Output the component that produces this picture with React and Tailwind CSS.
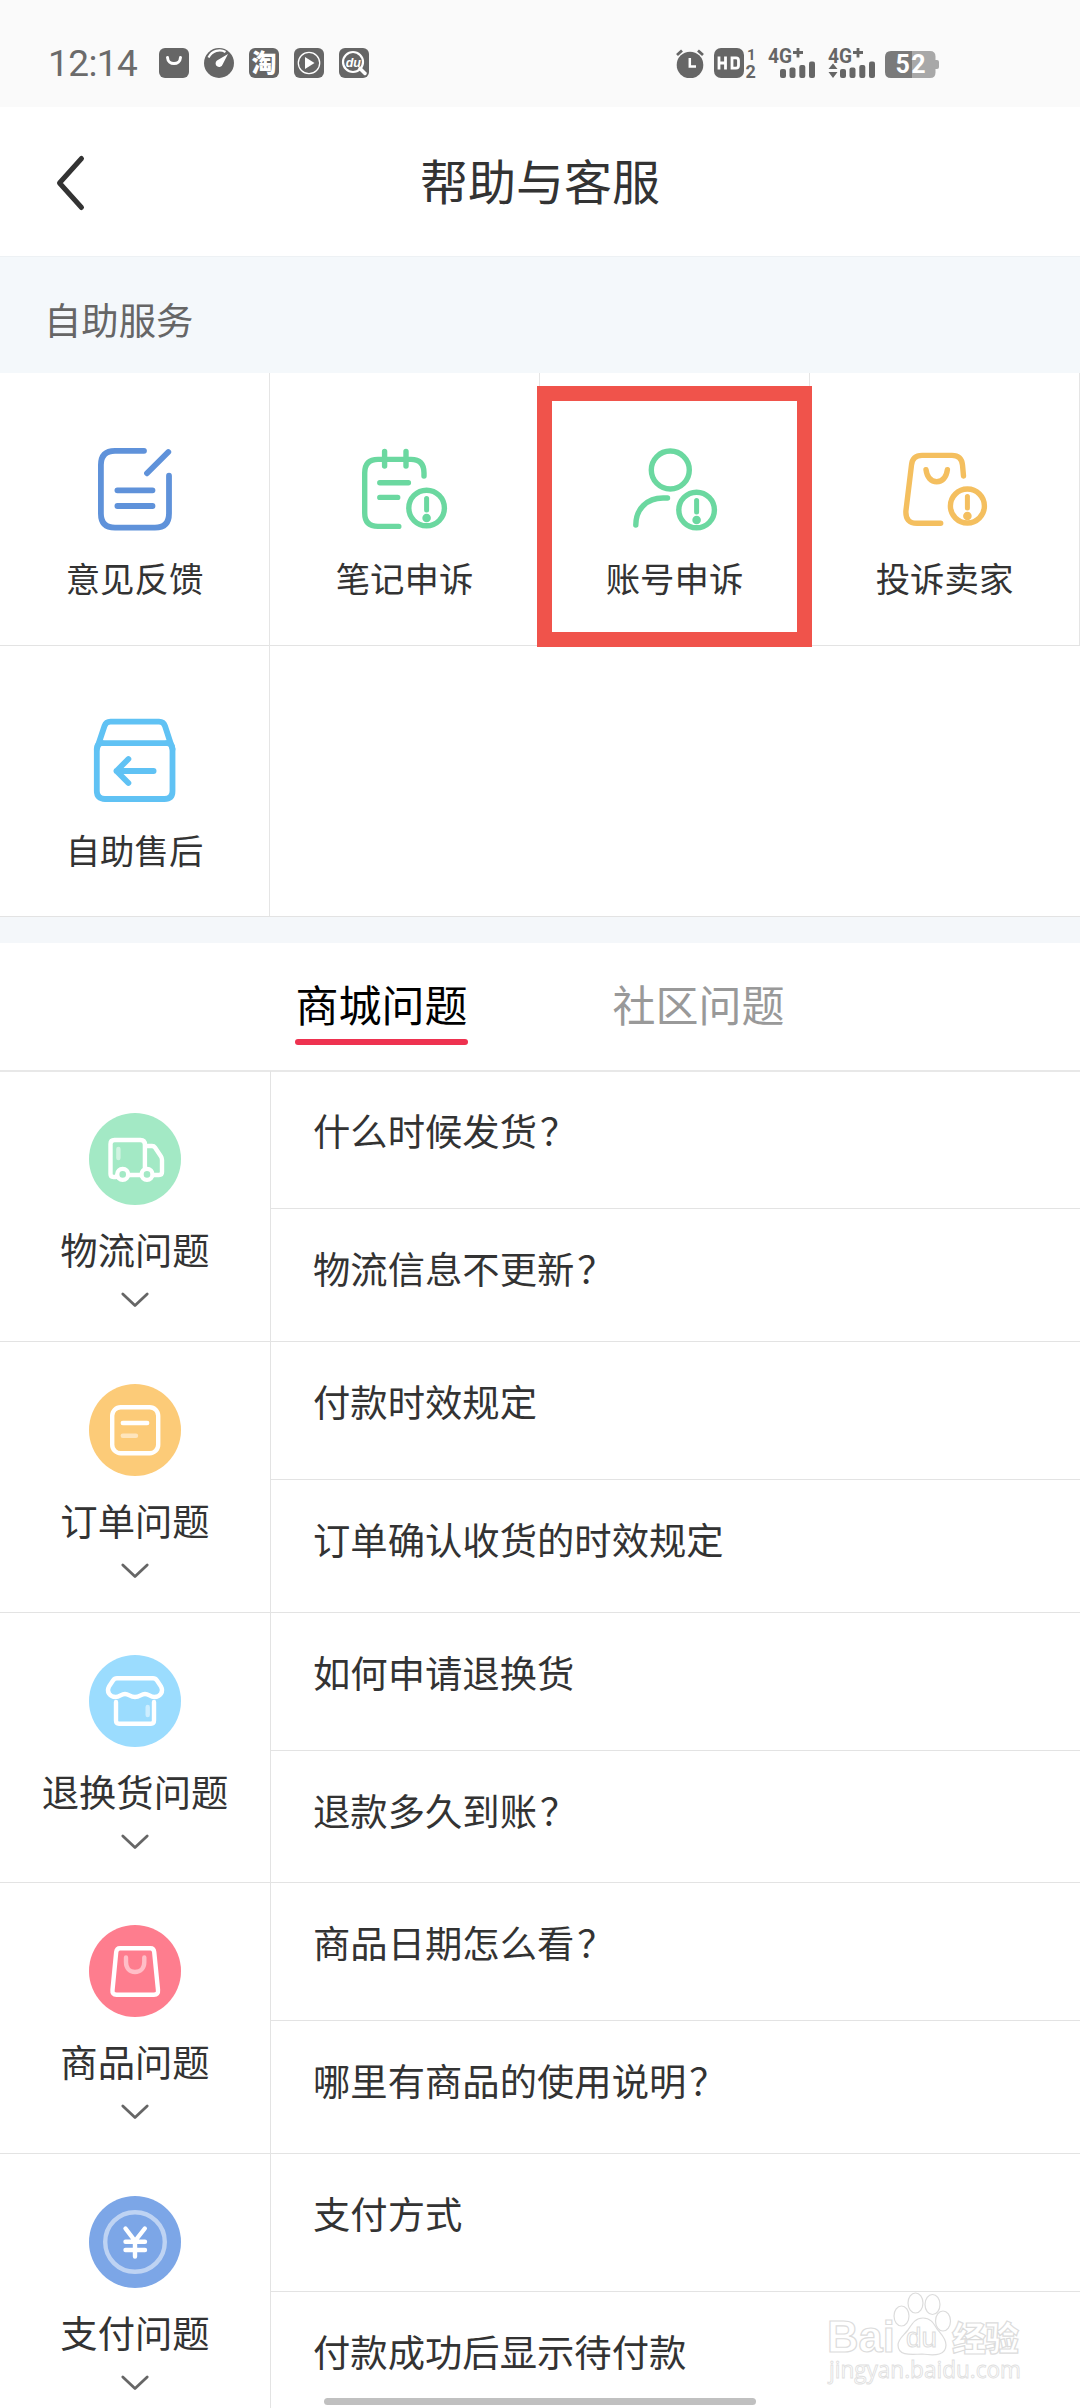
const HELP_FONT = "font-['Noto_Sans_CJK_SC',sans-serif]";

function Stroke({ color, width = 5.4, className = "size-24", box = 96, children }) {
  return (
    <svg
      viewBox={`0 0 ${box} ${box}`}
      className={className}
      fill="none"
      stroke={color}
      strokeWidth={width}
      strokeLinecap="round"
      strokeLinejoin="round"
    >
      {children}
    </svg>
  );
}

function Alert({ x, y, color, r = 17.8 }) {
  return (
    <g>
      <circle cx={x} cy={y} r={r} />
      <path d={`M${x} ${y - 9.5}v11.5`} strokeWidth="5" />
      <circle cx={x} cy={y + 10} r="4.3" fill={color} stroke="none" />
    </g>
  );
}

const FeedbackIcon = () => (
  <Stroke color="#5f92da" width={5.8}>
    <path d="M57 9.8H28Q13.9 9.8 13.9 24V72.500Q13.9 86.7 28 86.700H68Q82 86.700 82 72.500V34.700" />
    <path d="M81.300 11 60 32.300M30.400 49.300H65.500M30.400 65H65.500" />
  </Stroke>
);
const NoteIcon = () => (
  <Stroke color="#6bd8a0">
    <path d="M67 35V32Q67 18.400 54 18.400H21Q7.700 18.400 7.700 32V72Q7.700 85.400 21 85.400H41.800" />
    <path d="M27.600 10.500V25M49 10.500V25M22.800 41.700H51.400M22.800 56.400H40.700" />
    <Alert x={69.6} y={67} color="#6bd8a0" />
  </Stroke>
);
const AccountIcon = () => (
  <Stroke color="#6bd8a0">
    <circle cx="43.300" cy="29" r="19" />
    <path d="M8.800 84C8.800 68 20 57 36 57H40.500" />
    <Alert x={69.6} y={69} color="#6bd8a0" />
  </Stroke>
);
const SellerIcon = () => (
  <Stroke color="#f4bf5f">
    <path d="M66.500 35 65.500 24Q64.500 14.400 55 14.400H25Q15.500 14.400 14.500 24L8.900 70Q8.300 82.300 20 82.300H43.700" />
    <path d="M29 28.700C30 36.500 34 40.700 39.700 40.700S49.400 36.500 50.400 28.700" />
    <Alert x={70.4} y={65} r={17} color="#f4bf5f" />
  </Stroke>
);
const AfterSaleIcon = () => (
  <Stroke color="#60c2f4" width={5.8}>
    <path d="M9.800 78V36L17.500 13Q19 8.700 23.500 8.700H72Q76.500 8.700 78 13L85.500 36V78Q85.500 86 77.500 86H18Q9.800 86 9.800 78Z" />
    <path d="M12.500 30.200H83M66.600 58H29.500M41.400 46 29.500 58 41.400 70" />
    <path d="M9.800 36Q10 30.200 15 30.200M85.500 36Q85.300 30.200 80 30.200" />
  </Stroke>
);

const TruckIcon = () => (
  <>
    <path d="M27 64H24.500Q21.500 64 21.500 61V31Q21.500 27 25.500 27H51.500Q55.900 27 55.900 31.500V56M40 62H51.500M56 33H63Q65 33 66 34.500L72 43.500Q73 45 73 47V59Q73 62 70 62H65" />
    <circle cx="33.700" cy="61.400" r="5.500" />
    <circle cx="58" cy="61.400" r="5.500" />
    <path d="M29.400 36V45" opacity=".5" />
  </>
);
const OrderIcon = () => (
  <>
    <rect x="23.200" y="23.200" width="46" height="46" rx="8.500" />
    <path d="M33.800 39H58.200" />
    <path d="M33.800 51.800H47" opacity=".5" />
  </>
);
const StoreIcon = () => (
  <>
    <path d="M28 23.300H64Q66.500 23.300 68 25.500L72 31.500C75 37 71 42 65.500 42 61 42 60 39 56 39S51 42 46 42 40 39 36 39 31 42 26.500 42C21 42 17 37 20 31.500L24 25.500Q25.500 23.300 28 23.300Z" />
    <path d="M27 47V65.500Q27 68.700 30 68.700H62Q65 68.700 65 65.500V47" />
    <path d="M58.700 52V60" opacity=".5" />
  </>
);
const BagIcon = () => (
  <>
    <path d="M31 23.300H61.500Q64.800 23.300 65.200 27L69 65Q69.500 69.700 65 69.700H27.500Q23 69.700 23.500 65L27.200 27Q27.700 23.300 31 23.300Z" />
    <path d="M37 32.500V37C37 43 40.500 47 46 47S55.300 43 55.300 37V32.500" opacity=".5" />
  </>
);
const YenIcon = () => (
  <>
    <circle cx="46" cy="46" r="29.800" opacity=".5" />
    <path d="M36.500 32.500 46 45 55.800 32.500M46 45V60.500M36.500 45.700H56M36.500 54H56" />
  </>
);

const services = [
  { label: "意见反馈", Icon: FeedbackIcon },
  { label: "笔记申诉", Icon: NoteIcon },
  { label: "账号申诉", Icon: AccountIcon },
  { label: "投诉卖家", Icon: SellerIcon },
  { label: "自助售后", Icon: AfterSaleIcon },
];

const topics = [
  { label: "物流问题", Icon: TruckIcon, bg: "bg-[#a3e9c5]", items: ["什么时候发货？", "物流信息不更新？"] },
  { label: "订单问题", Icon: OrderIcon, bg: "bg-[#fccb78]", items: ["付款时效规定", "订单确认收货的时效规定"] },
  { label: "退换货问题", Icon: StoreIcon, bg: "bg-[#9bdcfe]", items: ["如何申请退换货", "退款多久到账？"] },
  { label: "商品问题", Icon: BagIcon, bg: "bg-[#fe7d8e]", items: ["商品日期怎么看？", "哪里有商品的使用说明？"] },
  { label: "支付问题", Icon: YenIcon, bg: "bg-[#7ca6e7]", items: ["支付方式", "付款成功后显示待付款"] },
];

function AppBadge({ round, children }) {
  return (
    <svg viewBox="0 0 30 30" className="size-[30px] overflow-visible">
      {round ? <circle cx="15" cy="15" r="15" fill="#666" /> : <rect width="30" height="30" rx="6" fill="#666" />}
      {children}
    </svg>
  );
}

function Signal({ data }) {
  return (
    <svg viewBox="0 0 48 30" className="h-[30px] w-12 overflow-visible" fill="#666">
      <text x="0" y="14.500" fontFamily="Roboto" fontWeight="700" fontSize="19.500" textLength="24" lengthAdjust="spacingAndGlyphs">4G</text>
      <path d="M25 4.500H35M30 0V9.500" stroke="#666" strokeWidth="2.800" />
      <rect x="12" y="21" width="6" height="9" rx="2" />
      <rect x="21.500" y="19.500" width="6" height="10.500" rx="2" />
      <rect x="31.300" y="17" width="6" height="13" rx="2" />
      <rect x="41" y="13.500" width="6" height="16.500" rx="2" />
      {data && <path d="M.5 21 5 15.500 9.500 21ZM.5 24 5 30 9.500 24Z" />}
    </svg>
  );
}

function StatusBar() {
  return (
    <div className="flex h-[107px] items-start bg-[#fafafa] pt-12 pl-12">
      <div className="mt-px w-[111px] font-[Roboto] text-[37px] leading-[30px] tracking-[-0.6px] text-[#6b6b6b]">12:14</div>
      <div className="flex gap-[15px]">
        <AppBadge>
          <path d="M8.500 9.500C9 17.500 21 17.500 21.500 9.500" fill="none" stroke="#fff" strokeWidth="3" strokeLinecap="round" />
        </AppBadge>
        <AppBadge round>
          <path d="M4.500 9.500C8 2.500 16 .8 21.500 4" fill="none" stroke="#fff" strokeWidth="2.200" />
          <path d="M24 6 18.600 16.500A3.600 3.600 0 1 1 13 12.500Z" fill="#fff" />
        </AppBadge>
        <AppBadge>
          <text x="2.500" y="24" fontFamily="Noto Sans CJK SC" fontWeight="900" fontSize="25" fill="#fff">淘</text>
        </AppBadge>
        <AppBadge>
          <circle cx="15" cy="15" r="10.700" fill="none" stroke="#fff" strokeWidth="1.300" />
          <path d="M11 9 20.500 15 11 21Z" fill="#fff" />
        </AppBadge>
        <AppBadge>
          <circle cx="14" cy="14" r="10" fill="none" stroke="#fff" strokeWidth="2.200" />
          <path d="M21 20.500 26 25.500" stroke="#fff" strokeWidth="3.500" strokeLinecap="round" />
          <text x="6.700" y="18.500" fontFamily="Liberation Sans" fontStyle="italic" fontWeight="700" fontSize="12.500" fill="#fff">du</text>
        </AppBadge>
      </div>
      <div className="ml-[306px] flex">
        <svg viewBox="0 0 30 30" className="size-[30px]">
          <circle cx="15" cy="17" r="13.300" fill="#666" />
          <path d="M2 7 7 2.500M28 7 23 2.500" stroke="#666" strokeWidth="2.800" />
          <path d="M14.800 10V18.500H21" fill="none" stroke="#fff" strokeWidth="2.500" />
        </svg>
        <svg viewBox="0 0 44 30" className="ml-[9px] h-[30px] w-11 overflow-visible">
          <rect width="30" height="30" rx="7" fill="#666" />
          <path d="M5 8.500V21.500M11.500 8.500V21.500M5 15H11.500M18 9.800H22Q24.500 9.800 24.500 12.500V17.500Q24.500 20.200 22 20.200H18Z" fill="none" stroke="#fff" strokeWidth="2.800" />
          <g fill="#666" fontFamily="Roboto" fontWeight="700">
            <text x="33" y="12" fontSize="15">1</text>
            <text x="31.500" y="29.500" fontSize="18">2</text>
          </g>
        </svg>
        <div className="ml-[10px] flex gap-3">
          <Signal />
          <Signal data />
        </div>
        <svg viewBox="0 0 54 30" className="ml-[9px] h-[30px] w-[54px]">
          <path d="M27 3H45Q50.500 3 50.500 8.500V12H52Q54 12 54 14V19Q54 21 52 21H50.500V24.500Q50.500 30 45 30H27Z" fill="#a8a8a8" />
          <path d="M27 3H6Q0 3 0 9V24Q0 30 6 30H27Z" fill="#7a7a7a" />
          <text x="10.500" y="25" fontFamily="Roboto" fontWeight="700" fontSize="25" textLength="30" fill="#fff">52</text>
        </svg>
      </div>
    </div>
  );
}

function Question({ text }) {
  if (!text.endsWith("？")) return text;
  return (
    <>
      {text.slice(0, -1)}
      <span className="ml-[3px] inline-block origin-bottom-left">？</span>
    </>
  );
}

function TopicRow({ label, Icon, bg, items }) {
  return (
    <div className="flex h-[270.75px] border-b border-[#e3e3e3]">
      <div className="flex w-[271px] flex-col items-center border-r border-[#e3e3e3] pt-[42px]">
        <div className={`size-[92px] rounded-full ${bg}`}>
          <Stroke color="#fff" width={4.400} box={92} className="size-[92px]">
            <Icon />
          </Stroke>
        </div>
        <div className="mt-[17px] text-[37.33px] leading-[54px] whitespace-nowrap">{label}</div>
        <svg viewBox="0 0 30 18" className="mt-[15px] h-[18px] w-[30px]" fill="none" stroke="#666" strokeWidth="2.800" strokeLinecap="round" strokeLinejoin="round">
          <path d="M2.800 3 15 14.500 27.200 3" />
        </svg>
      </div>
      <div className="flex-1 text-[37.33px] leading-[54px]">
        <div className="h-[138px] border-b border-[#e3e3e3] pt-8 pl-[42px]"><Question text={items[0]} /></div>
        <div className="pt-8 pl-[42px]"><Question text={items[1]} /></div>
      </div>
    </div>
  );
}

function Watermark() {
  return (
    <svg viewBox="0 0 200 100" className="absolute top-[2290px] left-[826px] h-[100px] w-[200px]" fill="#fff" stroke="#dcdcdc" strokeWidth="1.200">
      <text x="1" y="62" fontFamily="Liberation Sans" fontWeight="700" fontSize="45" textLength="68" lengthAdjust="spacingAndGlyphs">Bai</text>
      <ellipse cx="75.500" cy="26" rx="7.500" ry="10" />
      <ellipse cx="89.500" cy="13" rx="7.500" ry="10" />
      <ellipse cx="106.500" cy="14.500" rx="7.500" ry="10" />
      <ellipse cx="117" cy="31" rx="7.500" ry="10" />
      <path d="M97 28C89 28 86 34 82 40 77 46 72 49 72 55 72 65 82 65 96 64 110 66 120 65 120 55 120 48 115 44 111 39 107 32 104 28 97 28Z" />
      <text x="80" y="57" fontFamily="Liberation Sans" fontSize="27" strokeWidth="1" textLength="31" lengthAdjust="spacingAndGlyphs">du</text>
      <text x="126" y="61" fontFamily="Noto Sans CJK SC" fontWeight="900" fontSize="34" textLength="67">经验</text>
      <text x="3" y="88" fontFamily="Open Sans" fontSize="24" stroke="#e0e0e0" strokeWidth=".9" textLength="192" lengthAdjust="spacingAndGlyphs">jingyan.baidu.com</text>
    </svg>
  );
}

export default function App() {
  return (
    <div className={`relative h-[2408px] w-[1080px] overflow-hidden bg-white text-[#333] ${HELP_FONT}`}>
      <StatusBar />
      <header className="relative flex h-[149px] items-center justify-center pb-[6px]">
        <svg viewBox="0 0 32 60" className="absolute top-[46px] left-[54px] h-[60px] w-8" fill="none" stroke="#333" strokeWidth="5" strokeLinecap="round" strokeLinejoin="round">
          <path d="M27.500 5.500 5.500 30 27.500 54.500" />
        </svg>
        <h1 className="text-[48px] leading-[70px] font-normal">帮助与客服</h1>
      </header>

      <h2 className="h-[117px] border-t border-[#edf1f4] bg-[#f4f8fb] pt-[35px] pl-11 text-[37.33px] leading-[54px] font-normal text-[#666]">自助服务</h2>

      <section className="grid grid-cols-4 border-b border-[#e3e3e3]">
        {services.map(({ label, Icon }, i) => (
          <div
            key={label}
            className={`flex flex-col items-center border-r border-[#e5e5e5] pt-[68px] ${i < 4 ? "h-[272px]" : "h-[271px]"}`}
          >
            <Icon />
            <div className="mt-[15px] text-[34.4px] leading-[50px]">{label}</div>
          </div>
        )).toSpliced(4, 0, <div key="rule" className="col-span-4 -mb-px h-px bg-[#e3e3e3]" />)}
      </section>

      <div className="h-[26px] bg-[#f4f7fa]" />

      <nav className="flex h-[129px] justify-center gap-[144px] border-b-2 border-[#e8e8e8] pt-[30px] text-[43px] leading-[60px]">
        <div className="flex w-[173px] flex-col items-center text-black">
          商城问题
          <span className="mt-1.5 h-1.5 w-full rounded-full bg-[#ee3250]" />
        </div>
        <div className="w-[173px] text-center text-[#999]">社区问题</div>
      </nav>

      <main className="-mt-px">
        {topics.map((t) => (
          <TopicRow key={t.label} {...t} />
        ))}
      </main>

      <div className="absolute top-[386px] left-[537px] h-[261px] w-[275px] border-[15px] border-[#f0534b]" />
      <Watermark />
      <div className="absolute top-[2398px] left-[324px] h-[7px] w-[432px] rounded-full bg-[#c0c0c0]" />
    </div>
  );
}
